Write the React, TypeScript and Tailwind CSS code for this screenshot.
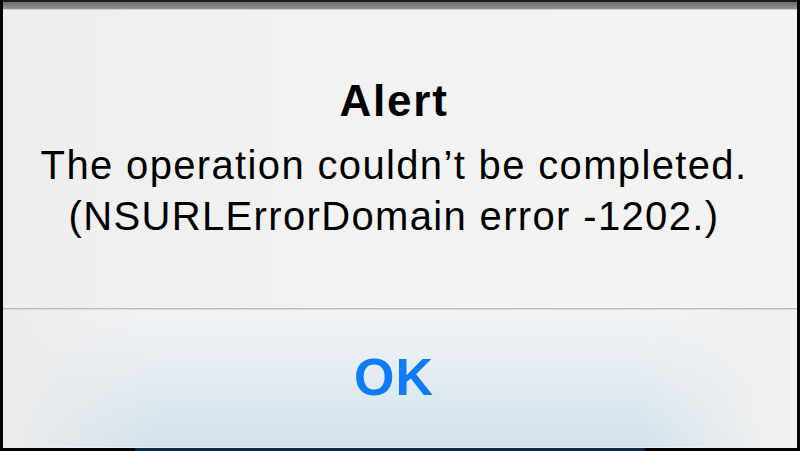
export default function App() {
  return (
    <div
      className="w-[800px] h-[451px] bg-black flex flex-col px-[3px] pb-[3px] overflow-hidden"
      style={{ fontFamily: '"Liberation Sans", Arial, sans-serif' }}
    >
      {/* status-ish top band */}
      <div className="h-[2px] bg-[#1c1c1c]" />
      <div className="h-[7px] bg-gradient-to-b from-[#6f6f6f] to-[#929292]" />
      <div className="h-px bg-[#cfcfcf]" />

      {/* alert body */}
      <div className="flex-1 flex flex-col bg-[linear-gradient(to_right,#eeeeee,#f2f2f2_40%,#f3f3f3)]">
        <div className="flex flex-col items-center pt-[69px] pr-[12px] h-[298px] text-black">
          <div className="text-[44px] leading-[44px] font-bold tracking-[1.8px]">Alert</div>
          <div className="mt-[17px] flex flex-col items-center text-[40px] leading-[51px] tracking-[1.35px]">
            <span>The operation couldn’t be completed.</span>
            <span>(NSURLErrorDomain error -1202.)</span>
          </div>
        </div>

        <div className="h-px bg-[#bcbcbc]" />
        <div className="h-px bg-[#dadada]" />

        <div className="flex-1 flex flex-col bg-[linear-gradient(to_right,#ececec_0%,rgba(238,239,240,0)_20%,rgba(238,239,240,0)_80%,#f0f0f0_96%),linear-gradient(to_bottom,#f2f3f5_0%,#e8eef3_35%,#d2e1ec_100%)]">
          <div className="flex justify-center pt-[41px] pr-[12px]">
            <span className="text-[52px] leading-[52px] font-semibold tracking-[1px] text-[#0f7cf7]">
              OK
            </span>
          </div>
        </div>
        <div className="h-px bg-[#e8eef2]" />
      </div>
      <div className="h-0 flex justify-center">
        <div className="w-[510px] h-[3px] bg-[#0c2a45] -ml-[20px]" />
      </div>
    </div>
  );
}
